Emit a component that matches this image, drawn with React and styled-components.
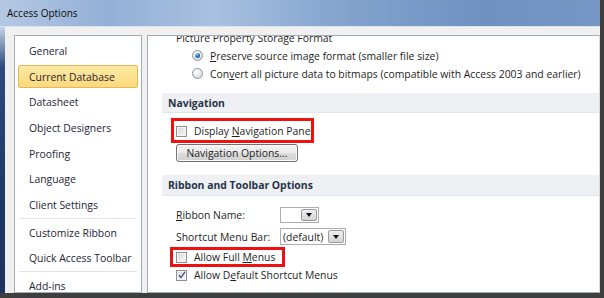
import React from 'react';
import styled, { createGlobalStyle } from 'styled-components';

const FONT = `"Open Sans", "Noto Sans", "DejaVu Sans", sans-serif`;

const GlobalStyle = createGlobalStyle`
  html, body {
    margin: 0;
    padding: 0;
    background: #fff;
  }
`;

// window frame, with the blog's drop shadow on right and bottom
const Screen = styled.div`
  width: 604px;
  height: 298px;
  box-sizing: border-box;
  overflow: hidden;
  display: flex;
  flex-direction: column;
  border-right: 4px solid #3e3e3e;
  border-bottom: 5px solid #3e3e3e;
  background: #f0f0f0;
  font-family: ${FONT};
  color: #1e1e1e;
`;

const TitleBar = styled.div`
  flex: none;
  height: 27px;
  box-sizing: border-box;
  display: flex;
  align-items: center;
  padding-left: 7px;
  font-size: 10px;
  color: #0b0b0b;
  border-bottom: 1px solid #dbe3ee;
  background: linear-gradient(90deg, #b4c8e2 0%, #94b0d7 18%, #a9c1e0 36%, #86a5cf 55%, #6f92c3 80%, #7696c5 100%);
`;

const Body = styled.div`
  flex: 1;
  min-height: 0;
  display: flex;
  gap: 5px;
  padding: 8px 0 0 14px;
  background:
    linear-gradient(#c3d2e6, #2c4c7c 15%, #1f3a66 60%, #1c355e) left top / 5px 100% no-repeat,
    #f0f0f0;
`;

const Panel = styled.div`
  box-sizing: border-box;
  background: #fff;
  border: 1px solid #a3abb5;
  overflow: hidden;
`;

const NavPanel = styled(Panel)`
  flex: none;
  width: 128px;
  padding-top: 2px;
  display: flex;
  flex-direction: column;
`;

const NavItem = styled.div`
  flex: none;
  height: 23.7px;
  margin: 1px 3px;
  box-sizing: border-box;
  display: flex;
  align-items: center;
  padding-left: 10px;
  font-size: 10.4px;
  color: #1d2536;
  border-radius: 2px;
  border: 1px solid ${(p) => (p.$active ? '#e2b85a' : 'transparent')};
  background: ${(p) => (p.$active ? 'linear-gradient(#fdeaa6, #fbd97c)' : 'transparent')};
`;

const NavSeparator = styled.div`
  flex: none;
  height: 1px;
  margin: 0 4px 1px;
  background: #e3e3e3;
`;

const ContentPanel = styled(Panel)`
  flex: 1;
  border-right: 1px solid #d8d8d8;
`;

const ContentInner = styled.div`
  margin-top: -7.5px;
  display: flex;
  flex-direction: column;
  font-size: 10.4px;
`;

const GroupLabel = styled.div`
  height: 18px;
  line-height: 18px;
  padding-left: 28px;
`;

const Row = styled.div`
  position: relative;
  display: flex;
  align-items: center;
  gap: 7px;
  height: ${(p) => p.$h || 18}px;
  margin-top: ${(p) => p.$mt || 0}px;
  padding-left: ${(p) => p.$indent || 28}px;
`;

const SectionHeader = styled.div`
  height: ${(p) => p.$h}px;
  margin: ${(p) => p.$mt}px 0 0 14px;
  box-sizing: border-box;
  display: flex;
  align-items: center;
  padding-left: 6px;
  font-weight: 700;
  color: #26334a;
  background: #eef0f3;
  border-bottom: 1px solid #e2e5ea;
`;

const Key = styled.span`
  text-decoration: underline;
  text-underline-offset: 1px;
`;

const Radio = styled.span`
  flex: none;
  width: 11px;
  height: 11px;
  box-sizing: border-box;
  border-radius: 50%;
  border: 1px solid #8b949e;
  display: flex;
  align-items: center;
  justify-content: center;
  background: radial-gradient(circle at 35% 30%, #ffffff, #d7dadd 80%);

  &::after {
    content: '';
    display: ${(p) => (p.$checked ? 'block' : 'none')};
    width: 5px;
    height: 5px;
    border-radius: 50%;
    background: radial-gradient(circle at 35% 30%, #8fd0ff, #1f6cc4 55%, #0d3f86);
  }
`;

const Check = styled.span`
  flex: none;
  width: 11px;
  height: 11px;
  box-sizing: border-box;
  border: 1px solid #8e8f8f;
  box-shadow: inset 0 0 0 1px #f5f5f5;
  background: linear-gradient(135deg, #d7d7d7, #f9f9f9);
  display: flex;
  align-items: center;
  justify-content: center;
`;

const CheckMark = () => (
  <svg width="8" height="8" viewBox="0 0 8 8">
    <path d="M1 4.2 L3 6.5 L7 0.8" fill="none" stroke="#3b4c8a" strokeWidth="1.3" />
  </svg>
);

const Button = styled.button`
  margin-top: 4px;
  margin-left: 28px;
  align-self: flex-start;
  width: 122px;
  height: 18px;
  padding: 0;
  box-sizing: border-box;
  font-family: ${FONT};
  font-size: 10.4px;
  color: #1e1e1e;
  border: 1px solid #707070;
  border-radius: 3px;
  box-shadow: inset 0 0 0 1px #fcfcfc;
  background: linear-gradient(#f2f2f2 0%, #ebebeb 50%, #dddddd 51%, #cfcfcf 100%);
`;

const FieldLabel = styled.span`
  width: 97px;
  flex: none;
`;

const Combo = styled.div`
  display: flex;
  align-items: stretch;
  height: 100%;
  box-sizing: border-box;
  border: 1px solid #abadb3;
  background: #fff;
`;

const ComboText = styled.span`
  width: ${(p) => p.$w}px;
  display: flex;
  align-items: center;
  padding-left: 2px;
`;

const ComboButton = styled.span`
  width: 16px;
  margin: 1px;
  box-sizing: border-box;
  border: 1px solid #9a9a9a;
  border-radius: 2px;
  background: linear-gradient(#f0f0f0, #d4d4d4);
  display: flex;
  align-items: center;
  justify-content: center;

  &::after {
    content: '';
    border-left: 3.5px solid transparent;
    border-right: 3.5px solid transparent;
    border-top: 4px solid #111;
  }
`;

// red annotation box drawn over the screenshot
const Highlight = styled.div`
  position: absolute;
  left: ${(p) => p.$x}px;
  top: ${(p) => p.$y}px;
  width: ${(p) => p.$w}px;
  height: ${(p) => p.$h}px;
  box-sizing: border-box;
  border: 3px solid #ee1111;
  pointer-events: none;
`;

const navItems = [
  'General',
  'Current Database',
  'Datasheet',
  'Object Designers',
  'Proofing',
  'Language',
  'Client Settings',
  '-',
  'Customize Ribbon',
  'Quick Access Toolbar',
  '-',
  'Add-ins',
];

const App = () => {
  return (
    <>
      <GlobalStyle />
      <Screen>
        <TitleBar>Access Options</TitleBar>
        <Body>
          <NavPanel>
            {navItems.map((item, i) =>
              item === '-' ? (
                <NavSeparator key={i} />
              ) : (
                <NavItem key={i} $active={item === 'Current Database'}>
                  {item}
                </NavItem>
              )
            )}
          </NavPanel>

          <ContentPanel>
            <ContentInner>
              <GroupLabel>Picture Property Storage Format</GroupLabel>
              <Row $indent={44}>
                <Radio $checked />
                <span>
                  <Key>P</Key>reserve source image format (smaller file size)
                </span>
              </Row>
              <Row $indent={44}>
                <Radio />
                <span>
                  Con<Key>v</Key>ert all picture data to bitmaps (compatible with Access 2003 and earlier)
                </span>
              </Row>

              <SectionHeader $h={20} $mt={10.5}>Navigation</SectionHeader>
              <Row $mt={9}>
                <Check />
                <span>
                  Display <Key>N</Key>avigation Pane
                </span>
                <Highlight $x={23} $y={-4} $w={143} $h={25} />
              </Row>
              <Button>Navigation Options...</Button>

              <SectionHeader $h={21} $mt={13}>Ribbon and Toolbar Options</SectionHeader>
              <Row $mt={11} $h={16}>
                <FieldLabel>
                  <Key>R</Key>ibbon Name:
                </FieldLabel>
                <Combo>
                  <ComboText $w={17} />
                  <ComboButton />
                </Combo>
              </Row>
              <Row $mt={5} $h={17}>
                <FieldLabel>Shortcut Menu Bar:</FieldLabel>
                <Combo>
                  <ComboText $w={44}>(default)</ComboText>
                  <ComboButton />
                </Combo>
              </Row>
              <Row $mt={3}>
                <Check />
                <span>
                  Allow Full <Key>M</Key>enus
                </span>
                <Highlight $x={22} $y={-1} $w={115} $h={20} />
              </Row>
              <Row>
                <Check>
                  <CheckMark />
                </Check>
                <span>
                  Allow D<Key>e</Key>fault Shortcut Menus
                </span>
              </Row>
            </ContentInner>
          </ContentPanel>
        </Body>
      </Screen>
    </>
  );
};

export default App;
